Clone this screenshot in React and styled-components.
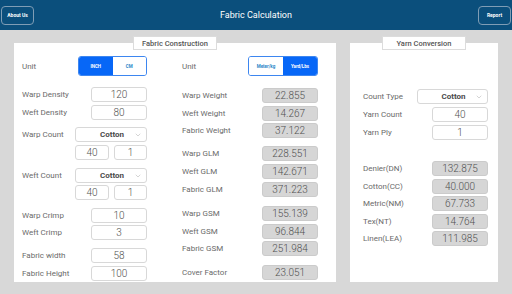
import React from "react";
import styled, { createGlobalStyle } from "styled-components";
import { ChevronDown } from "lucide-react";

const GlobalStyle = createGlobalStyle`
  body {
    margin: 0;
    background: #d8d8d8;
    font-family: Roboto, "Liberation Sans", sans-serif;
  }
`;

const Header = styled.header`
  height: 30px;
  background: #0b4f7c;
  display: flex;
  align-items: center;
  justify-content: space-between;
  padding: 0 1px;
`;

const HeadButton = styled.button`
  width: 33px;
  height: 19px;
  border: 1px solid #7f9db5;
  border-radius: 4px;
  background: transparent;
  color: #fff;
  font-family: Roboto, sans-serif;
  font-size: 5px;
  font-weight: 700;
  padding: 0;
`;

const Title = styled.div`
  color: #fff;
  font-size: 9px;
`;

const Main = styled.main`
  display: flex;
  gap: 14px;
  padding: 13px 14px 12px;
`;

const Panel = styled.section`
  background: #fff;
  width: ${(p) => p.w}px;
  height: 239px;
  display: flex;
  flex-direction: column;
`;

const PanelTitle = styled.div`
  margin: -7px auto 0;
  width: 84px;
  height: 14px;
  box-sizing: border-box;
  border: 1px solid #dcdcdc;
  background: #fff;
  display: flex;
  align-items: center;
  justify-content: center;
  font-size: 7.5px;
  font-weight: 500;
  color: #555;
`;

const Columns = styled.div`
  display: flex;
  gap: 35px;
  padding: 0 18px 0 8px;
`;

const Column = styled.div`
  width: ${(p) => p.w}px;
  display: flex;
  flex-direction: column;
`;

const Group = styled.div`
  margin-top: ${(p) => p.top}px;
  display: flex;
  flex-direction: column;
  gap: ${(p) => p.gap ?? 3}px;
  padding: ${(p) => p.pad || "0"};
`;

const Row = styled.div`
  height: ${(p) => p.h || 15}px;
  display: flex;
  align-items: center;
  justify-content: ${(p) => (p.end ? "flex-end" : "space-between")};
  gap: ${(p) => (p.end ? "5px" : "0")};
`;

const Label = styled.span`
  font-size: 8px;
  color: #6a6a6a;
`;

const Field = styled.div`
  width: ${(p) => p.w || 56}px;
  height: 100%;
  box-sizing: border-box;
  border: 1px solid ${(p) => (p.out ? "#cbcbcb" : "#d8d8d8")};
  background: ${(p) => (p.out ? "#d6d6d6" : "#fff")};
  border-radius: 3px;
  display: flex;
  align-items: center;
  justify-content: center;
  font-size: 10px;
  font-weight: 300;
  color: #505050;
`;

const Select = styled.div`
  width: ${(p) => p.w || 72}px;
  height: 100%;
  box-sizing: border-box;
  border: 1px solid #d8d8d8;
  border-radius: 3px;
  display: flex;
  align-items: center;
  padding: 0 4px 0 14px;
  color: #aaa;
`;

const SelectText = styled.span`
  flex: 1;
  text-align: center;
  font-size: 8px;
  font-weight: 700;
  color: #4a4a4a;
`;

const Toggle = styled.div`
  width: ${(p) => p.w}px;
  height: 20px;
  box-sizing: border-box;
  border: 1px solid #3d86f0;
  border-radius: 3px;
  display: flex;
  overflow: hidden;
`;

const ToggleOption = styled.div`
  flex: 1;
  display: flex;
  align-items: center;
  justify-content: center;
  font-size: 4.5px;
  font-weight: 700;
  background: ${(p) => (p.on ? "#0767f7" : "#fff")};
  color: ${(p) => (p.on ? "#fff" : "#2a86c8")};
`;

function CountSelect({ w }) {
  return (
    <Select w={w}>
      <SelectText>Cotton</SelectText>
      <ChevronDown size={8} strokeWidth={1.5} />
    </Select>
  );
}

function InputRow({ label, value, out }) {
  return (
    <Row>
      <Label>{label}</Label>
      <Field out={out}>{value}</Field>
    </Row>
  );
}

function CountBlock({ label }) {
  return (
    <>
      <Row>
        <Label>{label}</Label>
        <CountSelect />
      </Row>
      <Row end>
        <Field w={34}>40</Field>
        <Field w={33}>1</Field>
      </Row>
    </>
  );
}

export default function App() {
  return (
    <>
      <GlobalStyle />
      <Header>
        <HeadButton>About Us</HeadButton>
        <Title>Fabric Calculation</Title>
        <HeadButton>Report</HeadButton>
      </Header>
      <Main>
        <Panel w={322}>
          <PanelTitle>Fabric Construction</PanelTitle>
          <Columns>
            <Column w={125}>
              <Group top={6}>
                <Row h={20}>
                  <Label>Unit</Label>
                  <Toggle w={69}>
                    <ToggleOption on>INCH</ToggleOption>
                    <ToggleOption>CM</ToggleOption>
                  </Toggle>
                </Row>
              </Group>
              <Group top={11}>
                <InputRow label="Warp Density" value="120" />
                <InputRow label="Weft Density" value="80" />
              </Group>
              <Group top={7}>
                <CountBlock label="Warp Count" />
              </Group>
              <Group top={8} gap={2}>
                <CountBlock label="Weft Count" />
              </Group>
              <Group top={8} gap={2}>
                <InputRow label="Warp Crimp" value="10" />
                <InputRow label="Weft Crimp" value="3" />
              </Group>
              <Group top={8}>
                <InputRow label="Fabric width" value="58" />
                <InputRow label="Fabric Height" value="100" />
              </Group>
            </Column>
            <Column w={136}>
              <Group top={6}>
                <Row h={20}>
                  <Label>Unit</Label>
                  <Toggle w={70}>
                    <ToggleOption>Meter/kg</ToggleOption>
                    <ToggleOption on>Yard/Lbs</ToggleOption>
                  </Toggle>
                </Row>
              </Group>
              <Group top={12} gap={2.5}>
                <InputRow out label="Warp Weight" value="22.855" />
                <InputRow out label="Weft Weight" value="14.267" />
                <InputRow out label="Fabric Weight" value="37.122" />
              </Group>
              <Group top={8} gap={3}>
                <InputRow out label="Warp GLM" value="228.551" />
                <InputRow out label="Weft GLM" value="142.671" />
                <InputRow out label="Fabric GLM" value="371.223" />
              </Group>
              <Group top={9} gap={2.5}>
                <InputRow out label="Warp GSM" value="155.139" />
                <InputRow out label="Weft GSM" value="96.844" />
                <InputRow out label="Fabric GSM" value="251.984" />
              </Group>
              <Group top={9}>
                <InputRow out label="Cover Factor" value="23.051" />
              </Group>
            </Column>
          </Columns>
        </Panel>
        <Panel w={148}>
          <PanelTitle>Yarn Conversion</PanelTitle>
          <Group top={39} pad="0 10px 0 13px">
            <Row>
              <Label>Count Type</Label>
              <CountSelect w={71} />
            </Row>
            <InputRow label="Yarn Count" value="40" />
            <InputRow label="Yarn Ply" value="1" />
          </Group>
          <Group top={21} gap={2.5} pad="0 10px 0 13px">
            <InputRow out label="Denier(DN)" value="132.875" />
            <InputRow out label="Cotton(CC)" value="40.000" />
            <InputRow out label="Metric(NM)" value="67.733" />
            <InputRow out label="Tex(NT)" value="14.764" />
            <InputRow out label="Linen(LEA)" value="111.985" />
          </Group>
        </Panel>
      </Main>
    </>
  );
}
